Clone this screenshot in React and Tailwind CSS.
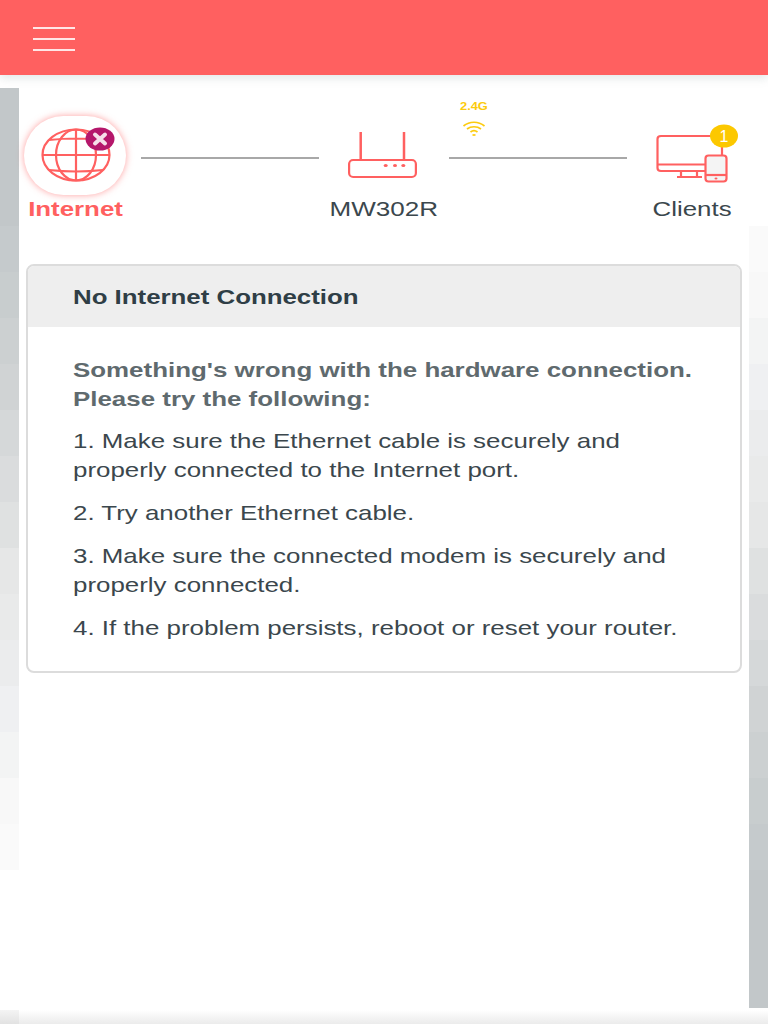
const leftBands = [
  "bg-[#c2c7c9]", "bg-[#c2c7c9]", "bg-[#c2c7c9]", "bg-[#c5cacc]", "bg-[#c8cdce]", "bg-[#ccd0d1]",
  "bg-[#d0d3d4]", "bg-[#d5d8d9]", "bg-[#dadcdd]", "bg-[#dfe1e1]", "bg-[#e6e7e7]", "bg-[#e9eaea]",
  "bg-[#ebeced]", "bg-[#eff0f2]", "bg-[#f3f4f4]", "bg-[#f8f8f8]", "bg-[#fafafa]",
];
const rightBands = [...leftBands].reverse();

function Strip({ bands, className }) {
  return (
    <div className={"w-[19px] shrink-0 flex flex-col " + className}>
      {bands.map((b, i) => (
        <div key={i} className={"h-[46px] " + b} />
      ))}
    </div>
  );
}

function GlobeIcon() {
  return (
    <svg width="102" height="79" viewBox="0 0 102 79" fill="none">
      <g stroke="#ff6060" strokeWidth="2.2">
        <ellipse cx="52" cy="39" rx="33.5" ry="25.5" />
        <ellipse cx="52" cy="39" rx="20" ry="25.5" />
        <path d="M52 13.5V64.5M18.5 39H85.5M25 24Q52 21 79 24M25 54Q52 57 79 54" />
      </g>
      <ellipse cx="76" cy="23" rx="14.5" ry="11.5" fill="#b5176b" />
      <path d="M71 18.5L81 27.5M81 18.5L71 27.5" stroke="#f6dfe9" strokeWidth="4" strokeLinecap="round" />
    </svg>
  );
}

function RouterIcon() {
  return (
    <svg width="112" height="50" viewBox="0 0 112 50" fill="none">
      <path d="M33.7 1V29M77 1V29" stroke="#ff6060" strokeWidth="2.5" />
      <rect x="22.1" y="29" width="66.8" height="17" rx="4" stroke="#ff6060" strokeWidth="2.2" />
      <ellipse cx="58.7" cy="34.5" rx="2" ry="1.6" fill="#ff6060" />
      <ellipse cx="68" cy="34.5" rx="2" ry="1.6" fill="#ff6060" />
      <ellipse cx="76.3" cy="34.5" rx="2" ry="1.6" fill="#ff6060" />
    </svg>
  );
}

function WifiIcon() {
  return (
    <svg width="24" height="15" viewBox="0 0 24 15" fill="none" stroke="#fccb0e" strokeWidth="1.7">
      <path d="M1.5 5C7.5 0 16.5 0 22.5 5" />
      <path d="M5 8C9 5 15 5 19 8" />
      <path d="M8.5 11C10.5 9.5 13.5 9.5 15.5 11" />
      <path d="M10.5 14H13.5" />
    </svg>
  );
}

function ClientsIcon() {
  return (
    <svg width="114" height="64" viewBox="0 0 114 64" fill="none">
      <g stroke="#ff6060" strokeWidth="2.2">
        <path d="M70 51H26Q22.5 51 22.5 48V19Q22.5 16 26 16H87V35" />
        <path d="M22.5 44.5H70M46 51V56M62 51V56M42 57H67" />
        <rect x="70.5" y="35.5" width="21" height="26" rx="3" fill="#f4f4f4" />
        <path d="M70.5 55H91.5" />
      </g>
      <ellipse cx="81" cy="58.5" rx="1.5" ry="1" fill="#ff6060" />
      <ellipse cx="89" cy="16" rx="14" ry="11.5" fill="#fcc800" />
      <text x="89" y="22" textAnchor="middle" fontSize="16" fill="#fff" fontFamily="Liberation Sans, sans-serif">1</text>
    </svg>
  );
}

export default function App() {
  return (
    <div className="h-[1024px] overflow-hidden flex flex-col bg-white text-[21px] text-[#3b474d] font-['Liberation_Sans',sans-serif]">
      {/* Header */}
      <div className="relative z-10 h-[75px] shrink-0 bg-[#ff6060] shadow-[0_3px_9px_rgba(190,200,200,0.45)] pl-[33px] pt-[27px]">
        <div className="w-[42px] flex flex-col gap-[9px]">
          <div className="h-[2px] bg-[#ffe6e6]" />
          <div className="h-[2px] bg-[#ffe6e6]" />
          <div className="h-[2px] bg-[#ffe6e6]" />
        </div>
      </div>

      <div className="flex flex-1 min-h-0">
        <Strip bands={leftBands} className="pt-[13px]" />

        <div className="flex-1 min-w-0">
          {/* Status row */}
          <div className="flex items-start pt-[25px]">
            <div className="w-[114px] flex flex-col items-center">
              <div className="mt-[16px] mr-[2px] w-[102px] h-[79px] rounded-full bg-white shadow-[0_0_7px_rgba(255,96,96,0.6)]">
                <GlobeIcon />
              </div>
              <div className="mt-[2px] h-6 leading-6 font-bold text-[#ff6060] scale-x-[1.23]">Internet</div>
            </div>
            <div className="w-[178px] h-[2px] bg-[#a8a8a8] ml-2 mt-[57px]" />
            <div className="w-[112px] ml-2 flex flex-col items-center">
              <div className="mt-[31px] h-[50px]">
                <RouterIcon />
              </div>
              <div className="mt-[16px] ml-[2px] h-6 leading-6 scale-x-[1.24]">MW302R</div>
            </div>
            <div className="ml-[10px] w-[178px]">
              <div className="w-[50px] flex flex-col items-center">
                <div className="h-3 leading-3 text-[11px] font-bold text-[#fccb0e] scale-x-[1.17]">2.4G</div>
                <div className="mt-[9px] h-[15px]">
                  <WifiIcon />
                </div>
              </div>
              <div className="h-[2px] bg-[#a8a8a8] mt-[21px]" />
            </div>
            <div className="w-[114px] ml-2 flex flex-col items-center">
              <div className="mt-[20px] h-[64px]">
                <ClientsIcon />
              </div>
              <div className="mt-[13px] h-6 leading-6 scale-x-[1.23]">Clients</div>
            </div>
          </div>

          {/* Card */}
          <div className="mx-[7px] mt-[43px] h-[409px] rounded-lg border-2 border-[#dcdcdc] overflow-hidden">
            <div className="h-[61px] bg-[#eeeeee] pl-[45px] flex items-center font-bold text-[#2f3e46]">
              <span className="origin-left scale-x-[1.23]">No Internet Connection</span>
            </div>
            <div className="ml-[45px] pt-[28px] leading-[29px] text-[#3b474d] origin-left scale-x-[1.233]">
              <p className="font-bold text-[#5f6a6e] mb-[13px]">
                Something's wrong with the hardware connection.
                <br />
                Please try the following:
              </p>
              <p className="mb-[14px]">
                1. Make sure the Ethernet cable is securely and
                <br />
                properly connected to the Internet port.
              </p>
              <p className="mb-[14px]">2. Try another Ethernet cable.</p>
              <p className="mb-[14px]">
                3. Make sure the connected modem is securely and
                <br />
                properly connected.
              </p>
              <p>4. If the problem persists, reboot or reset your router.</p>
            </div>
          </div>
        </div>

        <Strip bands={rightBands} className="pt-[151px]" />
      </div>

      {/* Bottom edge */}
      <div className="h-[14px] shrink-0 flex bg-gradient-to-b from-white to-[#ebebeb]">
        <div className="w-[19px] bg-gradient-to-b from-[#f4f4f4] to-[#e2e2e2]" />
      </div>
    </div>
  );
}
